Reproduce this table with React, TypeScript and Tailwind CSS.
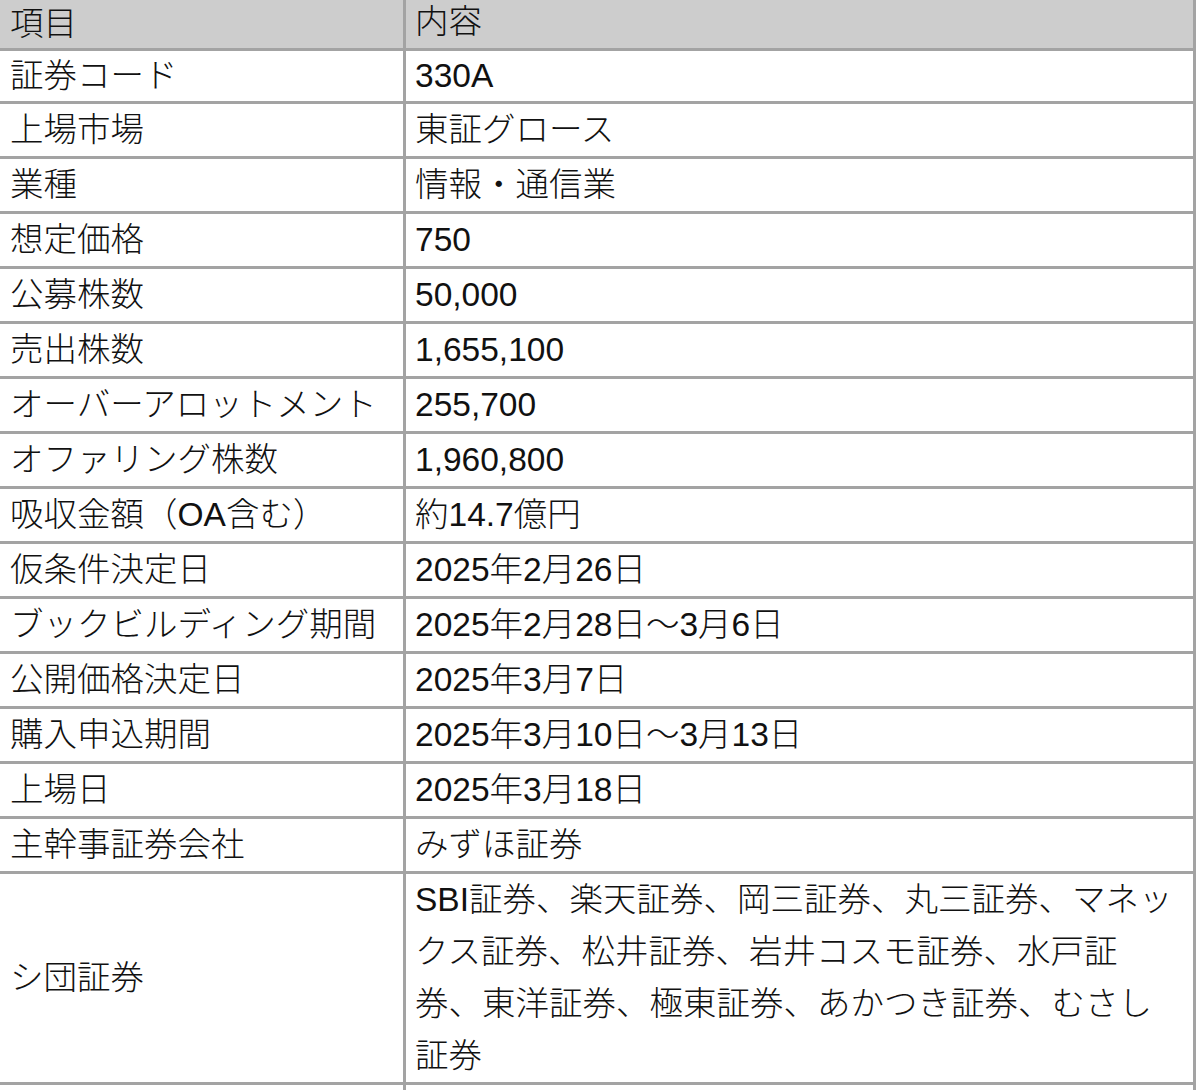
const rows: [string, string][] = [
  ['証券コード', '330A'],
  ['上場市場', '東証グロース'],
  ['業種', '情報・通信業'],
  ['想定価格', '750'],
  ['公募株数', '50,000'],
  ['売出株数', '1,655,100'],
  ['オーバーアロットメント', '255,700'],
  ['オファリング株数', '1,960,800'],
  ['吸収金額（OA含む）', '約14.7億円'],
  ['仮条件決定日', '2025年2月26日'],
  ['ブックビルディング期間', '2025年2月28日～3月6日'],
  ['公開価格決定日', '2025年3月7日'],
  ['購入申込期間', '2025年3月10日～3月13日'],
  ['上場日', '2025年3月18日'],
  ['主幹事証券会社', 'みずほ証券'],
];

const syndicate = [
  'SBI証券、楽天証券、岡三証券、丸三証券、マネッ',
  'クス証券、松井証券、岩井コスモ証券、水戸証',
  '券、東洋証券、極東証券、あかつき証券、むさし',
  '証券',
];

function Row({
  label,
  children,
  size = '',
  header = false,
}: {
  label: string;
  children: React.ReactNode;
  size?: string;
  header?: boolean;
}) {
  return (
    <div
      className={`flex border-b-[3px] border-[#a3a3a3] ${header ? 'bg-[#cdcdcd]' : 'bg-white'}`}
    >
      <div
        className={`w-[406px] shrink-0 flex items-center pl-[10px] border-r-[3px] border-[#a3a3a3] whitespace-nowrap ${size}`}
      >
        {label}
      </div>
      <div className={`flex-1 pl-[9px] border-r-[3px] border-[#a3a3a3] whitespace-nowrap ${size}`}>
        {children}
      </div>
    </div>
  );
}

export default function App() {
  return (
    <div className="w-[1200px] h-[1090px] overflow-hidden bg-white">
      <div
        className="w-[1196px] text-[33.5px] leading-[52px] font-light text-[#111]"
        style={{ fontFamily: '"Liberation Sans", "Noto Sans CJK JP", sans-serif' }}
      >
        <Row label="項目" header size="h-[48px] leading-[44px]">
          内容
        </Row>
        {rows.map(([k, v], i) => (
          <Row key={k} label={k} size={i === 0 ? 'h-[50px] leading-[50px]' : ''}>
            {v}
          </Row>
        ))}
        <Row label="シ団証券">
          {syndicate.map((line) => (
            <div key={line}>{line}</div>
          ))}
        </Row>
        <Row label="">&nbsp;</Row>
      </div>
    </div>
  );
}
